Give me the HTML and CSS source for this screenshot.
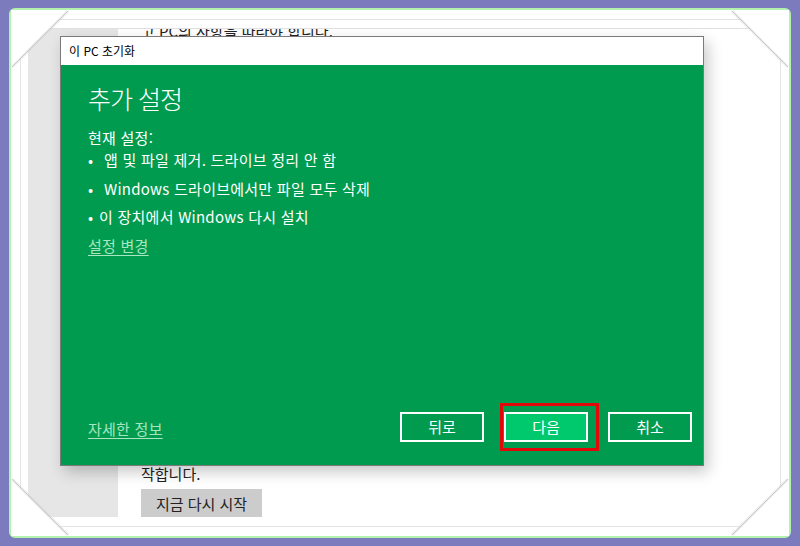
FILE: index.html
```html
<!DOCTYPE html>
<html lang="ko">
<head>
<meta charset="utf-8">
<title>이 PC 초기화</title>
<link rel="stylesheet" href="styles.css">
</head>
<body>
<div class="bg">
  <div class="frame">
    <div class="outer">
      <div class="screen">
        <div class="sidebar"></div>
        <div class="content">
          <p class="page-text top-text">고 PC의 사항을 따라야 합니다.</p>
          <div class="spacer"></div>
          <p class="page-text">작합니다.</p>
          <div class="restart">지금 다시 시작</div>
        </div>

        <div class="dialog">
          <div class="titlebar">이 PC 초기화</div>
          <div class="dbody">
            <h1 class="heading">추가 설정</h1>
            <p class="label">현재 설정:</p>
            <ul class="list">
              <li class="item first"><span class="dot">•</span><span class="wide">앱 및 파일 제거. 드라이브 정리 안 함</span></li>
              <li class="item"><span class="dot">•</span><span class="wide">Windows 드라이브에서만 파일 모두 삭제</span></li>
              <li class="item"><span class="dot">•</span><span class="narrow">이 장치에서 Windows 다시 설치</span></li>
            </ul>
            <a class="link change">설정 변경</a>
            <div class="footer">
              <a class="link more">자세한 정보</a>
              <div class="buttons">
                <div class="btn">뒤로</div>
                <div class="btn primary">다음</div>
                <div class="btn">취소</div>
              </div>
            </div>
          </div>
        </div>
      </div>
    </div>
    <svg class="folds" viewBox="0 0 778 526" width="778" height="526">
      <polygon points="0,0 57,0 0,57" fill="#fff"/>
      <polygon points="721,0 778,0 778,57" fill="#fff"/>
      <polygon points="0,469 0,526 57,526" fill="#fff"/>
      <polygon points="778,469 778,526 721,526" fill="#fff"/>
      <g stroke="#cfcfcf" stroke-width="3" opacity="0.35" fill="none">
        <line x1="57" y1="1" x2="1" y2="57"/>
        <line x1="721" y1="1" x2="777" y2="57"/>
        <line x1="1" y1="469" x2="57" y2="525"/>
        <line x1="777" y1="469" x2="721" y2="525"/>
      </g>
      <g stroke="#c8c8c8" stroke-width="1" fill="none">
        <line x1="57" y1="1" x2="1" y2="57"/>
        <line x1="721" y1="1" x2="777" y2="57"/>
        <line x1="1" y1="469" x2="57" y2="525"/>
        <line x1="777" y1="469" x2="721" y2="525"/>
      </g>
    </svg>
  </div>
</div>
</body>
</html>
```

FILE: styles.css
```css
* { box-sizing: border-box; }
html, body { margin: 0; padding: 0; }
body {
  font-family: "Noto Sans CJK KR", "Noto Sans", sans-serif;
}
.bg {
  width: 800px;
  height: 546px;
  background: #7b7bbe;
  padding: 8px 9px;
}
.frame {
  position: relative;
  width: 782px;
  height: 530px;
  border: 2px solid #b2f2ac;
  border-radius: 6px;
  background: #fff;
  padding: 9px 8px 9px 9px;
}
.outer {
  height: 100%;
  border: 1px solid #e4e4e4;
  padding: 8px 9px 9px 7px;
}
.screen {
  position: relative;
  height: 100%;
  display: flex;
  overflow: hidden;
  border-top: 1px solid #e0e0e0;
  background: #fff;
}
.sidebar {
  width: 90px;
  background: #e6e6e6;
  flex: none;
}
.content {
  flex: 1;
  display: flex;
  flex-direction: column;
  padding-left: 23px;
}
.page-text {
  margin: 0;
  font-size: 15px;
  line-height: 20px;
  color: #222;
}
.top-text { margin-top: -8px; }
.spacer { flex: 1; }
.restart {
  align-self: flex-start;
  margin-top: 5px;
  margin-bottom: -4px;
  width: 121px;
  height: 32px;
  background: #cccccc;
  color: #222;
  font-size: 15px;
  line-height: 30px;
  text-align: center;
}
.dialog {
  position: absolute;
  left: 32px;
  top: 7px;
  width: 644px;
  height: 430px;
  border: 1px solid #7a7a7a;
  box-shadow: 4px 6px 14px rgba(0,0,0,0.22);
  display: flex;
  flex-direction: column;
}
.titlebar {
  height: 28px;
  background: #fff;
  font-size: 12px;
  line-height: 28px;
  padding-left: 8px;
  color: #000;
}
.dbody {
  flex: 1;
  background: #019b4f;
  color: #fff;
  padding: 17px 11px 23px 27px;
  display: flex;
  flex-direction: column;
}
.heading {
  margin: 0;
  font-size: 25px;
  font-weight: 300;
  line-height: 32px;
  letter-spacing: -1px;
}
.label {
  margin: 14px 0 0;
  font-size: 15px;
  line-height: 20px;
  letter-spacing: 0.25px;
}
.list {
  list-style: none;
  margin: 0;
  padding: 0;
}
.item {
  display: flex;
  font-size: 15px;
  line-height: 20px;
  letter-spacing: 0.25px;
  margin-top: 8.5px;
}
.item.first { margin-top: 2px; }
.dot { width: 16px; }
.narrow { margin-left: -5px; }
.link {
  color: #a6e6c0;
  text-decoration: underline;
  text-underline-offset: 3px;
  font-size: 15px;
  line-height: 20px;
  letter-spacing: 0.25px;
  align-self: flex-start;
}
.change { margin-top: 9px; }
.footer {
  margin-top: auto;
  display: flex;
  align-items: center;
  justify-content: space-between;
}
.more { align-self: center; margin-top: 3px; }
.buttons {
  display: flex;
  gap: 20px;
}
.btn {
  position: relative;
  width: 84px;
  height: 30px;
  border: 2px solid #fff;
  color: #fff;
  font-size: 15px;
  line-height: 26px;
  text-align: center;
}
.primary {
  background: #00c86c;
}
.primary::after {
  content: "";
  position: absolute;
  left: -6px;
  right: -13px;
  top: -11px;
  bottom: -11px;
  border: 3px solid #e2080a;
}
.folds {
  position: absolute;
  left: 0;
  top: 0;
  pointer-events: none;
}
```
